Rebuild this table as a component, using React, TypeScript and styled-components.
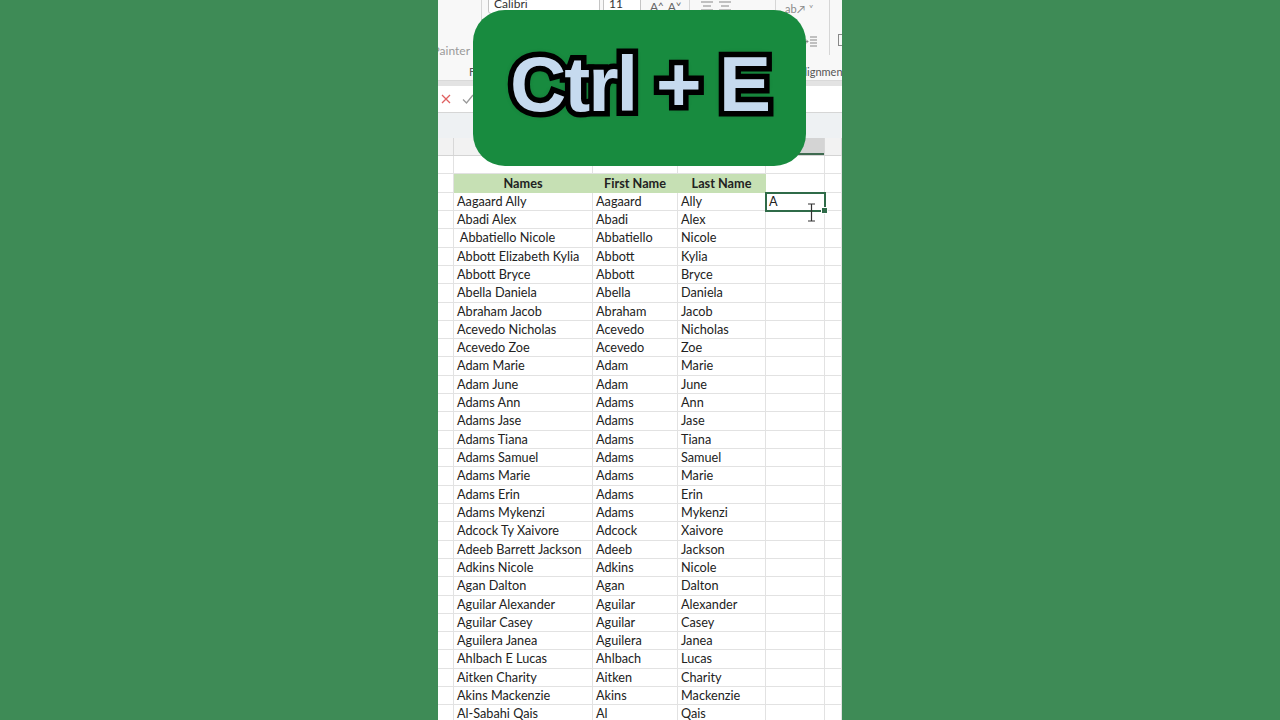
import React from "react";
import styled, { createGlobalStyle } from "styled-components";

const GlobalStyle = createGlobalStyle`
  html, body { margin: 0; padding: 0; background: #3e8b56; }
  body { font-family: "Lato", "Open Sans", sans-serif; }
`;

const Stage = styled.div`
  width: 1280px;
  height: 720px;
  display: flex;
  justify-content: center;
  overflow: hidden;
  background: #3e8b56;
`;

const Panel = styled.div`
  position: relative;
  width: 404px;
  height: 720px;
  background: #ffffff;
  overflow: hidden;
  display: flex;
  flex-direction: column;
`;

const Ribbon = styled.div`
  height: 80px;
  flex: none;
  background: #f8f8f8;
  display: flex;
  flex-direction: column;
`;

const RibbonTop = styled.div`
  height: 62px;
  display: flex;
  align-items: flex-start;
`;

const ClipCol = styled.div`
  width: 43px;
  height: 58px;
  flex: none;
  display: flex;
  align-items: flex-end;
  justify-content: flex-end;
  padding-right: 11px;
  box-sizing: border-box;
  font-size: 12px;
  color: #9a9a9a;
  white-space: nowrap;
`;

const Section = styled.div<{ $w: number; $column?: boolean }>`
  width: ${(p) => p.$w}px;
  flex: none;
  display: flex;
  flex-direction: ${(p) => (p.$column ? "column" : "row")};
  align-items: flex-start;
  gap: ${(p) => (p.$column ? "20px" : "0")};
  padding-top: ${(p) => (p.$column ? "2px" : "0")};
`;

const VSep = styled.div<{ $h: number; $ml?: number }>`
  width: 1px;
  flex: none;
  height: ${(p) => p.$h}px;
  margin-left: ${(p) => p.$ml ?? 0}px;
  background: #d6d6d6;
`;

const InputBox = styled.div<{ $w: number; $ml: number }>`
  width: ${(p) => p.$w}px;
  margin-left: ${(p) => p.$ml}px;
  margin-top: -6px;
  height: 20px;
  flex: none;
  box-sizing: border-box;
  border: 1px solid #c4c4c4;
  border-radius: 3px;
  background: #fff;
  font-size: 12px;
  line-height: 12px;
  color: #333;
  padding: 3px 5px;
`;

const RibbonGlyph = styled.div<{ $ml: number; $mt?: number }>`
  margin-left: ${(p) => p.$ml}px;
  margin-top: ${(p) => p.$mt ?? 0}px;
  flex: none;
  font-size: 12px;
  line-height: 14px;
  color: #666;
  display: flex;
  align-items: center;
  gap: 4px;
  white-space: nowrap;
`;

const SmallNote = styled.span<{ $size: number }>`
  font-size: ${(p) => p.$size}px;
  color: #8a8a8a;
`;

const RibbonLabels = styled.div`
  height: 18px;
  display: flex;
  align-items: center;
  font-size: 11px;
  color: #555;
  white-space: nowrap;
`;

const GroupLabel = styled.div<{ $w?: number; $pl?: number }>`
  width: ${(p) => (p.$w ? `${p.$w}px` : "auto")};
  padding-left: ${(p) => p.$pl ?? 0}px;
  box-sizing: border-box;
  flex: none;
`;

const RibbonEdge = styled.div`
  height: 5px;
  flex: none;
  background: #e3e3e3;
  border-top: 1px solid #d9d9d9;
`;

const FormulaBar = styled.div`
  height: 27px;
  flex: none;
  display: flex;
  align-items: center;
  gap: 11px;
  padding-left: 3px;
  background: #fff;
  border-bottom: 1px solid #d6d6d6;
  box-sizing: border-box;
`;

const GapStrip = styled.div`
  height: 25px;
  flex: none;
  background: #eef1f3;
`;

const COLS = "16px 139px 85px 88px 59px 17px";
const ROW_H = 18.32;

const ColHeaderRow = styled.div`
  height: 18px;
  flex: none;
  display: grid;
  grid-template-columns: ${COLS};
  background: #f2f2f2;
  border-bottom: 1px solid #d4d4d4;
  box-sizing: border-box;
`;

const ColHead = styled.div<{ $active?: boolean }>`
  border-right: 1px solid #d8d8d8;
  background: ${(p) => (p.$active ? "#d4d4d4" : "transparent")};
  box-shadow: ${(p) => (p.$active ? "inset 0 -2px 0 #3f6a50" : "none")};
  font-size: 11px;
  color: #444;
  display: flex;
  align-items: center;
  justify-content: center;
`;

const Sheet = styled.div`
  display: grid;
  grid-template-columns: ${COLS};
  grid-auto-rows: ${ROW_H}px;
  flex: none;
`;

const Cell = styled.div<{ $head?: boolean; $selected?: boolean }>`
  position: relative;
  box-sizing: border-box;
  border-right: 1px solid ${(p) => (p.$head ? "#c6e0b4" : "#e2e2e2")};
  border-bottom: 1px solid ${(p) => (p.$head ? "#c6e0b4" : "#e2e2e2")};
  background: ${(p) => (p.$head ? "#c6e0b4" : "#fff")};
  padding: 0 3px;
  font-family: "Lato", "Open Sans", sans-serif;
  font-size: 12.7px;
  font-weight: ${(p) => (p.$head ? 700 : 400)};
  text-align: ${(p) => (p.$head ? "center" : "left")};
  color: #222;
  line-height: ${(p) => (p.$head ? ROW_H + 1 : ROW_H - 1)}px;
  white-space: pre;
  overflow: ${(p) => (p.$selected ? "visible" : "hidden")};
  outline: ${(p) => (p.$selected ? "2px solid #2f6b48" : "none")};
  outline-offset: -1px;
  z-index: ${(p) => (p.$selected ? 2 : 0)};
  ${(p) =>
    p.$selected
      ? `&::after {
          content: "";
          position: absolute;
          right: -4px;
          bottom: -4px;
          width: 5px;
          height: 5px;
          background: #2f6b48;
          border: 1px solid #fff;
        }`
      : ""}
`;

const Cursor = styled.svg`
  position: absolute;
  left: 369px;
  top: 203px;
  z-index: 3;
`;

const Badge = styled.div`
  position: absolute;
  left: 35px;
  top: 10px;
  width: 333px;
  height: 156px;
  border-radius: 32px;
  background: #188b3f;
  display: flex;
  align-items: center;
  justify-content: center;
  z-index: 5;
`;

const BadgeText = styled.span`
  font-family: "Liberation Sans", Arial, sans-serif;
  font-weight: 700;
  font-size: 78px;
  letter-spacing: -2px;
  color: #c6daef;
  -webkit-text-stroke: 11px #000;
  paint-order: stroke fill;
  text-shadow: 0 0 7px rgba(0, 0, 0, 0.95), 0 0 4px #000;
  margin-top: -8px;
  white-space: pre;
`;

const rows: [string, string, string][] = [
  ["Aagaard Ally", "Aagaard", "Ally"],
  ["Abadi Alex", "Abadi", "Alex"],
  [" Abbatiello Nicole", "Abbatiello", "Nicole"],
  ["Abbott Elizabeth Kylia", "Abbott", "Kylia"],
  ["Abbott Bryce", "Abbott", "Bryce"],
  ["Abella Daniela", "Abella", "Daniela"],
  ["Abraham Jacob", "Abraham", "Jacob"],
  ["Acevedo Nicholas", "Acevedo", "Nicholas"],
  ["Acevedo Zoe", "Acevedo", "Zoe"],
  ["Adam Marie", "Adam", "Marie"],
  ["Adam June", "Adam", "June"],
  ["Adams Ann", "Adams", "Ann"],
  ["Adams Jase", "Adams", "Jase"],
  ["Adams Tiana", "Adams", "Tiana"],
  ["Adams Samuel", "Adams", "Samuel"],
  ["Adams Marie", "Adams", "Marie"],
  ["Adams Erin", "Adams", "Erin"],
  ["Adams Mykenzi", "Adams", "Mykenzi"],
  ["Adcock Ty Xaivore", "Adcock", "Xaivore"],
  ["Adeeb Barrett Jackson", "Adeeb", "Jackson"],
  ["Adkins Nicole", "Adkins", "Nicole"],
  ["Agan Dalton", "Agan", "Dalton"],
  ["Aguilar Alexander", "Aguilar", "Alexander"],
  ["Aguilar Casey", "Aguilar", "Casey"],
  ["Aguilera Janea", "Aguilera", "Janea"],
  ["Ahlbach E Lucas", "Ahlbach", "Lucas"],
  ["Aitken Charity", "Aitken", "Charity"],
  ["Akins Mackenzie", "Akins", "Mackenzie"],
  ["Al-Sabahi Qais", "Al", "Qais"],
];

const AlignIcon = () => (
  <svg width="14" height="10" viewBox="0 0 14 10">
    <path d="M1 1h12M3 5h8M1 9h12" stroke="#888" strokeWidth="1" fill="none" />
  </svg>
);

const IndentIcon = () => (
  <svg width="16" height="11" viewBox="0 0 16 11">
    <path d="M1 5.5h5M4 3.5l2 2-2 2M8 1h7M8 4h7M8 7h7M8 10h7" stroke="#888" strokeWidth="1" fill="none" />
  </svg>
);

export default function App() {
  return (
    <>
      <GlobalStyle />
      <Stage>
        <Panel>
          <Ribbon>
            <RibbonTop>
              <ClipCol>Format Painter</ClipCol>
              <VSep $h={42} />
              <Section $w={293}>
                <InputBox $w={112} $ml={6}>Calibri</InputBox>
                <InputBox $w={38} $ml={3}>11</InputBox>
                <RibbonGlyph $ml={9}>
                  <span>A˄</span>
                  <span>A˅</span>
                </RibbonGlyph>
                <VSep $h={12} $ml={8} />
                <RibbonGlyph $ml={10} $mt={1}>
                  <AlignIcon />
                  <AlignIcon />
                </RibbonGlyph>
              </Section>
              <VSep $h={30} />
              <Section $w={53} $column>
                <RibbonGlyph $ml={9}>
                  <SmallNote $size={11}>ab↗</SmallNote>
                  <SmallNote $size={9}>˅</SmallNote>
                </RibbonGlyph>
                <RibbonGlyph $ml={26}>
                  <IndentIcon />
                </RibbonGlyph>
              </Section>
              <VSep $h={55} />
              <RibbonGlyph $ml={8} $mt={34}>
                <svg width="10" height="12" viewBox="0 0 10 12">
                  <rect x="0.5" y="0.5" width="9" height="11" fill="none" stroke="#888" />
                </svg>
              </RibbonGlyph>
            </RibbonTop>
            <RibbonLabels>
              <GroupLabel $w={359} $pl={31}>Font</GroupLabel>
              <GroupLabel>Alignment</GroupLabel>
            </RibbonLabels>
          </Ribbon>
          <RibbonEdge />
          <FormulaBar>
            <svg width="10" height="10" viewBox="0 0 10 10">
              <path d="M1 1l8 8M9 1l-8 8" stroke="#e06060" strokeWidth="1.3" fill="none" />
            </svg>
            <svg width="12" height="10" viewBox="0 0 12 10">
              <path d="M1 5.5l3.5 3.5L11 1" stroke="#9a9a9a" strokeWidth="1.3" fill="none" />
            </svg>
          </FormulaBar>
          <GapStrip />
          <ColHeaderRow>
            <ColHead />
            <ColHead>B</ColHead>
            <ColHead>C</ColHead>
            <ColHead>D</ColHead>
            <ColHead $active>E</ColHead>
            <ColHead />
          </ColHeaderRow>
          <Sheet>
            <Cell />
            <Cell />
            <Cell />
            <Cell />
            <Cell />
            <Cell />
            <Cell />
            <Cell $head>Names</Cell>
            <Cell $head>First Name</Cell>
            <Cell $head>Last Name</Cell>
            <Cell />
            <Cell />
            {rows.map(([full, first, last], i) => (
              <React.Fragment key={i}>
                <Cell />
                <Cell>{full}</Cell>
                <Cell>{first}</Cell>
                <Cell>{last}</Cell>
                <Cell $selected={i === 0}>{i === 0 ? "A" : ""}</Cell>
                <Cell />
              </React.Fragment>
            ))}
          </Sheet>
          <Cursor width="9" height="19" viewBox="0 0 9 19">
            <path d="M1 1h7M4.5 1v17M1 18h7" stroke="#333" strokeWidth="1.2" fill="none" />
          </Cursor>
          <Badge>
            <BadgeText>Ctrl + E</BadgeText>
          </Badge>
        </Panel>
      </Stage>
    </>
  );
}
